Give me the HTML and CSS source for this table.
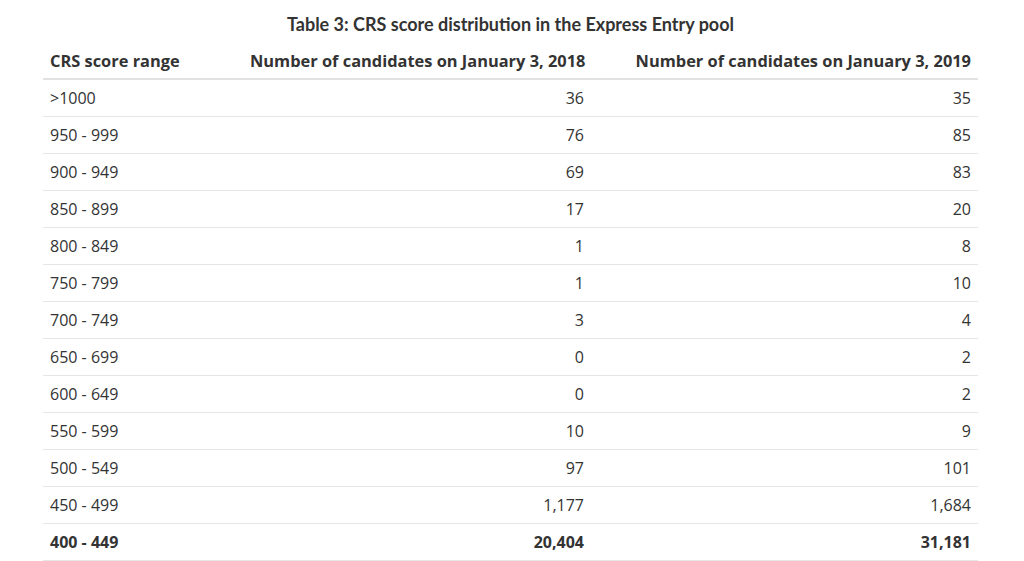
FILE: index.html
```html
<!DOCTYPE html>
<html lang="en">
<head>
<meta charset="utf-8">
<title>CRS score distribution</title>
<link rel="stylesheet" href="styles.css">
</head>
<body>
<div class="page">
  <table class="crs">
    <caption class="crs-caption">Table 3: CRS score distribution in the Express Entry pool</caption>
    <thead>
      <tr>
        <th class="col-range">CRS score range</th>
        <th class="num col-2018">Number of candidates on January 3, 2018</th>
        <th class="num col-2019">Number of candidates on January 3, 2019</th>
      </tr>
    </thead>
    <tbody>
      <tr><td>&gt;1000</td><td class="num">36</td><td class="num">35</td></tr>
      <tr><td>950 - 999</td><td class="num">76</td><td class="num">85</td></tr>
      <tr><td>900 - 949</td><td class="num">69</td><td class="num">83</td></tr>
      <tr><td>850 - 899</td><td class="num">17</td><td class="num">20</td></tr>
      <tr><td>800 - 849</td><td class="num">1</td><td class="num">8</td></tr>
      <tr><td>750 - 799</td><td class="num">1</td><td class="num">10</td></tr>
      <tr><td>700 - 749</td><td class="num">3</td><td class="num">4</td></tr>
      <tr><td>650 - 699</td><td class="num">0</td><td class="num">2</td></tr>
      <tr><td>600 - 649</td><td class="num">0</td><td class="num">2</td></tr>
      <tr><td>550 - 599</td><td class="num">10</td><td class="num">9</td></tr>
      <tr><td>500 - 549</td><td class="num">97</td><td class="num">101</td></tr>
      <tr><td>450 - 499</td><td class="num">1,177</td><td class="num">1,684</td></tr>
      <tr class="total"><td>400 - 449</td><td class="num">20,404</td><td class="num">31,181</td></tr>
    </tbody>
  </table>
</div>
</body>
</html>
```

FILE: styles.css
```css
html, body {
  margin: 0;
  padding: 0;
  background: #ffffff;
}

.page {
  padding: 0 46px 0 43px;
}

.crs {
  width: 935px;
  table-layout: fixed;
  border-collapse: collapse;
  font-family: "Open Sans", "Liberation Sans", sans-serif;
  font-size: 16px;
  color: #333333;
}

.crs-caption {
  font-family: Lato, "Liberation Sans", sans-serif;
  font-weight: 700;
  font-size: 18px;
  color: #333333;
  height: 42px;
  line-height: 48px;
  text-align: center;
  box-sizing: border-box;
}

.crs th {
  font-size: 16.4px;
  font-weight: 700;
  text-align: left;
  padding: 0 7px;
  height: 36px;
  border-bottom: 2px solid #e2e2e2;
  white-space: nowrap;
}

.crs td {
  padding: 0 7px;
  height: 36px;
  border-bottom: 1px solid #e6e6e6;
}

.crs .col-range {
  width: 186px;
}

.crs .col-2018 {
  width: 334px;
}

.crs .col-2019 {
  width: 373px;
}

.crs .num {
  text-align: right;
}

.crs tr.total td {
  font-weight: 700;
}
```
